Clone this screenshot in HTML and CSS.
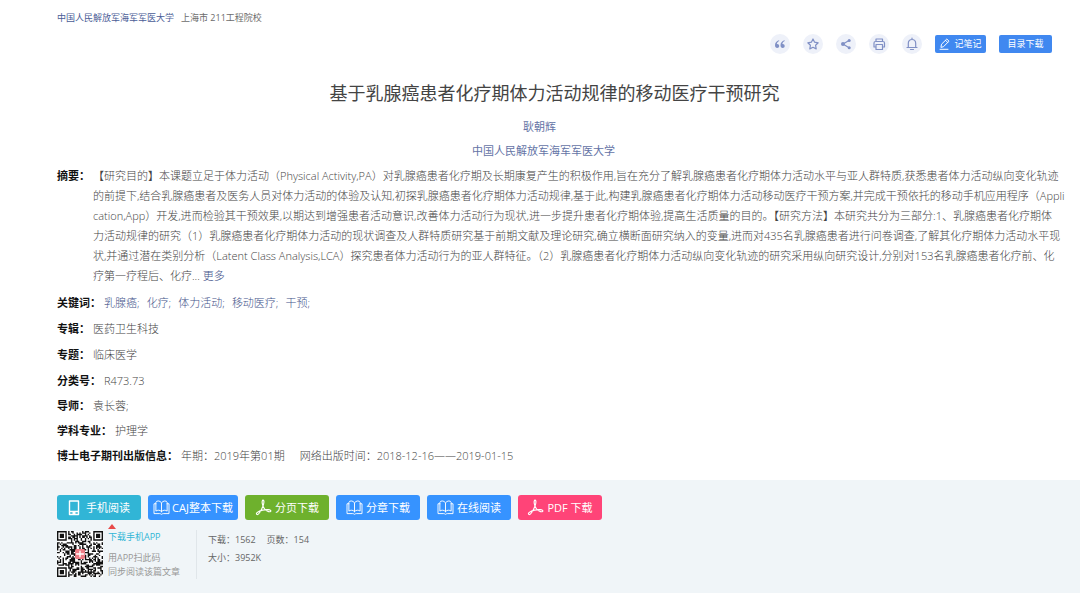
FILE: index.html
```html
<!DOCTYPE html>
<html lang="zh-CN">
<head>
<meta charset="utf-8">
<title>基于乳腺癌患者化疗期体力活动规律的移动医疗干预研究</title>
<link rel="stylesheet" href="styles.css">
</head>
<body>
<main class="paper">
  <header class="source"><a href="#">中国人民解放军海军军医大学</a><span>上海市 211工程院校</span></header>
  <div class="tools">
    <button class="round" type="button" aria-label="引用"><svg viewBox="0 0 20 20"><path class="solid" d="M9 6.2C6.4 7 5 8.8 5 11.2c0 1.7.9 2.8 2.2 2.8 1.200 0 2-.9 2-2s-.8-1.900-1.900-1.900h-.5C7 8.900 7.800 7.700 9.300 7zM14.500 6.200c-2.600.8-4 2.600-4 5 0 1.700.9 2.800 2.200 2.800 1.200 0 2-.9 2-2s-.8-1.900-1.900-1.900h-.5c.2-1.200 1-2.400 2.500-3.100z"/></svg></button>
    <button class="round" type="button" aria-label="收藏"><svg viewBox="0 0 20 20"><path d="M10 5l1.600 3.200 3.600.6-2.600 2.500.6 3.600-3.200-1.600-3.200 1.600.6-3.600-2.600-2.500 3.600-.6z"/></svg></button>
    <button class="round" type="button" aria-label="分享"><svg viewBox="0 0 20 20"><path d="M13 6.500L7 10l6 3.700"/><circle class="solid" cx="13.200" cy="6.500" r="1.500"/><circle class="solid" cx="7" cy="10" r="2"/><circle class="solid" cx="13.200" cy="13.700" r="1.500"/></svg></button>
    <button class="round" type="button" aria-label="打印"><svg viewBox="0 0 20 20"><path d="M7 7.500V5h6.500v2.500M7 13H5V9q0-1.500 1.500-1.500H14q1.500 0 1.500 1.500v4h-2M7 10.500h6.500v5H7z"/></svg></button>
    <button class="round" type="button" aria-label="提醒"><svg viewBox="0 0 20 20"><path d="M5 13.500h10M6.300 13.500V9.500Q6.300 5.500 10 5.500t3.700 4v4M10 5.500V4M8.500 15.500h3"/></svg></button>
    <button class="small note" type="button"><svg viewBox="0 0 12 12"><path d="M2 9l.5-2.800L7.800 1l2.200 2.200-5.300 5.300zM6.500 2.300l2.200 2.200M1 11.300h8"/></svg>记笔记</button>
    <button class="small catalog" type="button">目录下载</button>
  </div>
  <h1>基于乳腺癌患者化疗期体力活动规律的移动医疗干预研究</h1>
  <p class="author"><a href="#">耿朝辉</a></p>
  <p class="school"><a href="#">中国人民解放军海军军医大学</a></p>
  <section class="abstract">
    <strong>摘要：</strong>
    <p>
      <span>【研究目的】本课题立足于体力活动（Physical Activity,PA）对乳腺癌患者化疗期及长期康复产生的积极作用,旨在充分了解乳腺癌患者化疗期体力活动水平与亚人群特质,获悉患者体力活动纵向变化轨迹</span>
      <span>的前提下,结合乳腺癌患者及医务人员对体力活动的体验及认知,初探乳腺癌患者化疗期体力活动规律,基于此,构建乳腺癌患者化疗期体力活动移动医疗干预方案,并完成干预依托的移动手机应用程序（Appli</span>
      <span>cation,App）开发,进而检验其干预效果,以期达到增强患者活动意识,改善体力活动行为现状,进一步提升患者化疗期体验,提高生活质量的目的。【研究方法】本研究共分为三部分:1、乳腺癌患者化疗期体</span>
      <span>力活动规律的研究（1）乳腺癌患者化疗期体力活动的现状调查及人群特质研究基于前期文献及理论研究,确立横断面研究纳入的变量,进而对435名乳腺癌患者进行问卷调查,了解其化疗期体力活动水平现</span>
      <span>状,并通过潜在类别分析（Latent Class Analysis,LCA）探究患者体力活动行为的亚人群特征。（2）乳腺癌患者化疗期体力活动纵向变化轨迹的研究采用纵向研究设计,分别对153名乳腺癌患者化疗前、化</span>
      <span class="last">疗第一疗程后、化疗... <a href="#">更多</a></span>
    </p>
  </section>
  <dl class="fields">
    <div><dt>关键词：</dt><dd class="keywords"><a href="#">乳腺癌;</a><a href="#">化疗;</a><a href="#">体力活动;</a><a href="#">移动医疗;</a><a href="#">干预;</a></dd></div>
    <div><dt>专辑：</dt><dd>医药卫生科技</dd></div>
    <div><dt>专题：</dt><dd>临床医学</dd></div>
    <div><dt>分类号：</dt><dd>R473.73</dd></div>
    <div><dt>导师：</dt><dd>袁长蓉;</dd></div>
    <div><dt>学科专业：</dt><dd>护理学</dd></div>
    <div><dt>博士电子期刊出版信息：</dt><dd class="issue"><span>年期：2019年第01期</span><span>网络出版时间：2018-12-16——2019-01-15</span></dd></div>
  </dl>
</main>
<footer class="downloads">
  <svg class="defs" aria-hidden="true">
    <symbol id="book" viewBox="0 0 18 16"><path d="M9 12.500V3Q7.500 1 5.500 1T3 2.500v9.300q1.200-.9 3-.9t3 1.600q1.200-1.600 3-1.600t3 .9V2.500Q14.500 1 12.500 1T9 3M3 4H1v10.500h6q1 0 2 .8 1-.8 2-.8h6V4h-2"/></symbol>
    <symbol id="acrobat" viewBox="0 0 18 18"><path d="M8.500 1.200c1.500 0 1 4-.1 6.500C7.200 10.500 4.500 16.500 2.300 16.500c-2.500-.8 1-3.700 5.700-4.700 4.500-1 8.800-.7 8.800 1 0 1.500-4.200.8-6.800-2.500C7.500 7.200 6.800 1.200 8.500 1.200z"/></symbol>
  </svg>
  <div class="actions">
    <button class="act cyan" type="button"><svg class="phone" viewBox="0 0 12 16"><path d="M1.500 1h9v13.500h-9zM1.500 11.500h9M5 13h2"/></svg>手机阅读</button>
    <button class="act wide" type="button"><svg class="book"><use href="#book"/></svg>CAJ整本下载</button>
    <button class="act green" type="button"><svg class="pdf"><use href="#acrobat"/></svg>分页下载</button>
    <button class="act" type="button"><svg class="book"><use href="#book"/></svg>分章下载</button>
    <button class="act" type="button"><svg class="book"><use href="#book"/></svg>在线阅读</button>
    <button class="act pink" type="button"><svg class="pdf"><use href="#acrobat"/></svg>PDF 下载</button>
  </div>
  <div class="details">
    <div class="app">
      <svg class="qr" viewBox="0 0 33 33" role="img" aria-label="二维码"></svg>
      <div class="app-text"><a href="#">下载手机APP</a><span>用APP扫此码</span><span>同步阅读该篇文章</span></div>
    </div>
    <div class="stats"><div><span>下载：1562</span><span>页数：154</span></div><div><span>大小：3952K</span></div></div>
  </div>
</footer>
<script src="qr.js"></script>
</body>
</html>
```

FILE: styles.css
```css
* { box-sizing: border-box; }
body { margin: 0; min-height: 100vh; display: flex; flex-direction: column; background: #fff; color: #6c6c6c; font: 400 11px/20px "Open Sans", "Noto Sans CJK SC", sans-serif; }
a { color: #6473a6; text-decoration: none; }
button { border: 0; padding: 0; font: inherit; color: #fff; cursor: pointer; display: flex; align-items: center; justify-content: center; white-space: nowrap; }
svg { fill: none; stroke: currentColor; stroke-linejoin: round; stroke-linecap: round; }
h1, p, dl, dd { margin: 0; }
.paper { padding: 8px 28px 0 57px; }
.source { display: flex; gap: 7px; font-size: 9px; }
.source a { color: #4a5c96; }
.tools { display: flex; justify-content: flex-end; align-items: center; gap: 13px; margin-top: 6px; }
.round { width: 20px; height: 20px; border-radius: 50%; background: #eef1f9; color: #8090c5; }
.round svg { width: 20px; height: 20px; stroke-width: 1.2; }
.round .solid { fill: currentColor; stroke: none; }
.small { height: 18px; border-radius: 2px; background: #4088f0; font-size: 9px; line-height: 18px; }
.note { width: 51px; gap: 3px; }
.note svg { width: 12px; height: 12px; stroke-width: 1; }
.catalog { width: 53px; }
h1 { margin-top: 23px; text-align: center; font-size: 18px; font-weight: 400; line-height: 32px; color: #444; }
.author, .school { text-align: center; }
.author { margin-top: 8px; padding-right: 30px; }
.school { margin-top: 4px; padding-right: 22px; }
.abstract { display: flex; margin-top: 5px; }
.abstract strong { flex: 0 0 36px; white-space: nowrap; }
.abstract p { flex: 1; min-width: 0; font-weight: 300; color: #444; }
.abstract p > span { display: block; white-space: nowrap; text-align: justify; text-align-last: justify; }
.abstract p > .last { text-align-last: left; }
strong, dt { color: #111; font-weight: 700; }
.fields { display: flex; flex-direction: column; gap: 5px; margin-top: 7px; }
.fields div { display: flex; gap: 3px; }
.fields div:nth-child(-n+3) { padding-bottom: 1px; }
.fields dd { font-weight: 300; color: #444; }
.fields a, .abstract a { color: #44548a; }
.keywords { display: flex; gap: 7px; }
.issue { display: flex; gap: 15px; }
.downloads { flex: 1; margin-top: 14px; padding: 15px 28px 12px 57px; background: #f0f5f8; }
.defs { display: none; }
.actions { display: flex; gap: 7px; }
.act { width: 84px; height: 25px; gap: 3px; border-radius: 3px; background: #3693ff; }
.act.wide { width: 90px; gap: 2px; }
.act.cyan { background: #31b5d6; gap: 6px; }
.act.green { background: #6eb12d; }
.act.pink { background: #ff4478; }
.book { width: 17px; height: 15px; }
.pdf { width: 17px; height: 17px; stroke-width: 1.2; }
.phone { width: 12px; height: 16px; stroke-width: 1.4; }
.details { display: flex; margin-top: 10px; }
.app { display: flex; gap: 5px; width: 140px; border-right: 1px solid #e0e6ea; }
.qr { width: 46px; height: 46px; margin-top: 1px; stroke: none; }
.app-text { position: relative; display: flex; flex-direction: column; font-size: 9px; line-height: 14px; color: #999; white-space: nowrap; }
.app-text a { color: #31b5d6; margin-bottom: 7px; }
.app-text::before { content: ""; position: absolute; top: -6px; left: 0; border: 4px solid transparent; border-top: 0; border-bottom: 5px solid #e84a4a; }
.stats { padding: 1px 0 0 11px; font-size: 9px; line-height: 18px; color: #666; }
.stats div { display: flex; gap: 11px; }
```

FILE: qr.js
```js
const qr = document.querySelector('.qr');
const size = 33;
let seed = 19;
let path = '';
const finder = (x, y) => {
  const d = Math.max(Math.abs(x - 3), Math.abs(y - 3));
  return d > 3 ? false : d !== 2;
};
for (let y = 0; y < size; y++) {
  for (let x = 0; x < size; x++) {
    seed = (seed * 1103515245 + 12345) % 2147483648;
    const right = x > size - 9;
    const bottom = y > size - 9;
    let on = seed / 2147483648 < 0.52;
    if ((x < 8 || right) && (y < 8 || bottom) && !(right && bottom)) {
      on = finder(right ? size - 1 - x : x, bottom ? size - 1 - y : y);
    }
    if (on) path += `M${x} ${y}h1v1h-1z`;
  }
}
qr.innerHTML = `<path fill="#fff" d="M0 0h33v33H0z"/><path fill="#111" d="${path}"/>
<rect x="13" y="13" width="7" height="7" rx="1" fill="#ee7d86"/><path stroke="#fff" d="M14 16.500h5M16.500 14.500v4"/>`;
```
